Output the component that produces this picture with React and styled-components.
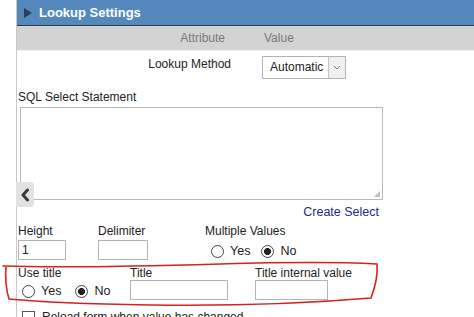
import React from "react";
import styled, { createGlobalStyle } from "styled-components";

const Global = createGlobalStyle`
  html, body {
    margin: 0;
    padding: 0;
    background: #fff;
    overflow: hidden;
  }
  body {
    font-family: "Liberation Sans", Arial, sans-serif;
    font-size: 12px;
    color: #222;
  }
`;

const Page = styled.div`
  position: relative;
  width: 474px;
  height: 317px;
  padding-left: 16px;
  box-sizing: border-box;
`;

const Panel = styled.div`
  border-left: 1px solid #c8c8c8;
  height: 100%;
`;

const Header = styled.div`
  height: 25px;
  background: #5589bd;
  border-bottom: 1px solid #2f3a45;
  display: flex;
  align-items: center;
  gap: 7px;
  padding-left: 7px;
  color: #fff;
  font-weight: bold;
  font-size: 13px;
`;

const Triangle = styled.span`
  width: 0;
  height: 0;
  border-top: 5px solid transparent;
  border-bottom: 5px solid transparent;
  border-left: 8px solid #2c3e52;
`;

const Grid = styled.div`
  display: grid;
  grid-template-columns: 245px 1fr;
  align-items: center;
`;

const HeadCell = styled.div`
  background: #d3d3d3;
  height: 24px;
  line-height: 24px;
  color: #7a7a7a;
  border-bottom: 1px solid #f2f2f2;
  text-align: ${(p) => (p.$right ? "right" : "left")};
  padding: ${(p) => (p.$right ? "0 37px 0 0" : "0 0 0 2px")};
`;

const AttrLabel = styled.div`
  text-align: right;
  padding-right: 31px;
  height: 30px;
  line-height: 26px;
`;

const Select = styled.div`
  display: flex;
  width: 84px;
  height: 23px;
  border: 1px solid #b4b4b4;
  box-sizing: border-box;
  margin-top: 2px;
  justify-self: start;
`;

const SelectText = styled.span`
  flex: 1;
  padding-left: 7px;
  line-height: 21px;
`;

const SelectArrow = styled.span`
  width: 16px;
  border-left: 1px solid #c4c4c4;
  background: #f0f0f0;
  display: flex;
  align-items: center;
  justify-content: center;
`;

const Content = styled.div`
  padding-left: 1px;
`;

const Label = styled.div`
  line-height: 14px;
  margin-top: ${(p) => p.$mt || 0}px;
  margin-bottom: ${(p) => p.$mb || 0}px;
`;

const TextArea = styled.div`
  position: relative;
  margin-left: 2px;
  width: 363px;
  height: 93px;
  border: 1px solid #b8b8b8;
  box-sizing: border-box;
`;

const Grip = styled.span`
  position: absolute;
  right: 2px;
  bottom: 2px;
  width: 6px;
  height: 6px;
  background: radial-gradient(circle, #999 0.6px, transparent 0.9px) 0 0 / 2px 2px;
  clip-path: polygon(100% 0, 100% 100%, 0 100%);
`;

const LinkRow = styled.div`
  width: 361px;
  text-align: right;
  margin-top: 5px;
  color: #27279a;
  font-size: 12.5px;
  line-height: 14px;
`;

const FieldRow = styled.div`
  display: flex;
  margin-top: ${(p) => p.$mt}px;
`;

const Field = styled.div`
  width: ${(p) => p.$w}px;
  flex: none;
`;

const Input = styled.div`
  width: ${(p) => p.$w}px;
  height: 20px;
  border: 1px solid #b4b4b4;
  box-sizing: border-box;
  margin-top: ${(p) => p.$mt ?? 2}px;
  padding-left: 3px;
  line-height: 18px;
`;

const Radios = styled.div`
  display: flex;
  align-items: center;
  margin-top: ${(p) => p.$mt}px;
  padding-left: ${(p) => p.$pl}px;
  font-size: 12.5px;
`;

const Radio = styled.span`
  width: 13px;
  height: 13px;
  border-radius: 50%;
  border: 1px solid #444;
  box-sizing: border-box;
  background: ${(p) =>
    p.$on ? "radial-gradient(circle, #222 0 3.2px, #fff 3.8px)" : "#fff"};
  margin-right: 6px;
  flex: none;
`;

const RadioText = styled.span`
  margin-right: ${(p) => p.$mr || 0}px;
`;

const CheckRow = styled.div`
  display: flex;
  align-items: center;
  gap: 7px;
  margin-top: 10px;
  padding-left: 4px;
`;

const Checkbox = styled.span`
  width: 13px;
  height: 13px;
  border: 1px solid #555;
  box-sizing: border-box;
  flex: none;
`;

const BackButton = styled.div`
  position: absolute;
  left: 16px;
  top: 182px;
  width: 18px;
  height: 25px;
  background: #e2e2e2;
  border-radius: 0 4px 4px 0;
  display: flex;
  align-items: center;
  justify-content: center;
`;

const Annotation = styled.svg`
  position: absolute;
  left: 0;
  top: 0;
  pointer-events: none;
`;

export default function App() {
  return (
    <>
      <Global />
      <Page>
        <Panel>
          <Header>
            <Triangle />
            Lookup Settings
          </Header>
          <Grid>
            <HeadCell $right>Attribute</HeadCell>
            <HeadCell>Value</HeadCell>
            <AttrLabel>Lookup Method</AttrLabel>
            <Select>
              <SelectText>Automatic</SelectText>
              <SelectArrow>
                <svg width="8" height="5" viewBox="0 0 8 5">
                  <path d="M1 1l3 3 3-3" fill="none" stroke="#777" strokeWidth="1" />
                </svg>
              </SelectArrow>
            </Select>
          </Grid>
          <Content>
            <Label $mt={9} $mb={3}>SQL Select Statement</Label>
            <TextArea>
              <Grip />
            </TextArea>
            <LinkRow>Create Select</LinkRow>
            <FieldRow $mt={5}>
              <Field $w={80}>
                <Label>Height</Label>
                <Input $w={48}>1</Input>
              </Field>
              <Field $w={107}>
                <Label>Delimiter</Label>
                <Input $w={50} />
              </Field>
              <Field $w={150}>
                <Label>Multiple Values</Label>
                <Radios $mt={6} $pl={6}>
                  <Radio />
                  <RadioText $mr={11}>Yes</RadioText>
                  <Radio $on />
                  <RadioText>No</RadioText>
                </Radios>
              </Field>
            </FieldRow>
            <FieldRow $mt={6}>
              <Field $w={112}>
                <Label>Use title</Label>
                <Radios $mt={4} $pl={4}>
                  <Radio />
                  <RadioText $mr={14}>Yes</RadioText>
                  <Radio $on />
                  <RadioText>No</RadioText>
                </Radios>
              </Field>
              <Field $w={125}>
                <Label>Title</Label>
                <Input $w={98} $mt={0} />
              </Field>
              <Field $w={100}>
                <Label>Title internal value</Label>
                <Input $w={73} $mt={0} />
              </Field>
            </FieldRow>
            <CheckRow>
              <Checkbox />
              <span>Reload form when value has changed</span>
            </CheckRow>
          </Content>
        </Panel>
        <BackButton>
          <svg width="10" height="14" viewBox="0 0 10 14">
            <path d="M7.5 2L3 7l4.5 5" fill="none" stroke="#3a3a3a" strokeWidth="3" strokeLinecap="round" strokeLinejoin="round" />
          </svg>
        </BackButton>
        <Annotation width="474" height="317" viewBox="0 0 474 317">
          <path
            d="M3 266 C 60 268, 150 266, 220 264 C 290 262, 340 262, 377 264 C 378 276, 374 290, 371 298 C 300 304, 220 306, 150 305 C 90 304, 40 302, 9 299 C 6 290, 5 276, 6 267"
            fill="none"
            stroke="#d42222"
            strokeWidth="1.6"
            strokeLinecap="round"
          />
        </Annotation>
      </Page>
    </>
  );
}
